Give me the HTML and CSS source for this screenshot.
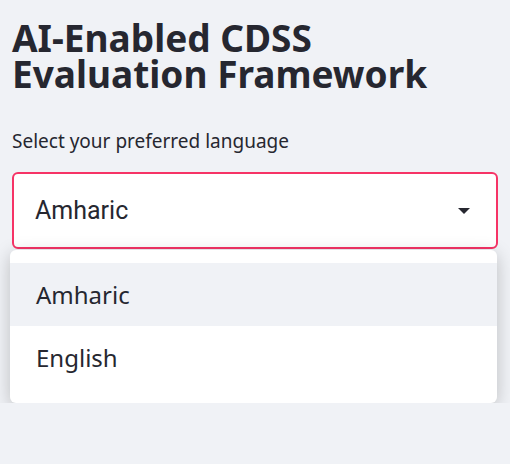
FILE: index.html
```html
<!DOCTYPE html>
<html lang="en">

<head>
    <meta charset="UTF-8">
    <meta name="viewport" content="width=device-width, initial-scale=1.0">
    <title>AI-Enabled CDSS Evaluation Framework</title>
    <link rel="stylesheet" href="styles.css">
</head>

<body>
    <div class="app-container">
        <h1 class="app-title">AI-Enabled CDSS Evaluation Framework</h1>
        <div class="field-label">Select your preferred language</div>
        <div class="select-wrap">
            <div class="select-box">
                <span class="select-value">Amharic</span>
                <svg class="select-arrow" width="12" height="6" viewBox="0 0 12 6">
                    <path d="M0 0 L12 0 L6 6 Z" fill="#262730"/>
                </svg>
            </div>
            <div class="select-menu">
                <div class="select-option active">Amharic</div>
                <div class="select-option">English</div>
            </div>
        </div>
    </div>
</body>

</html>
```

FILE: styles.css
```css
body {
    margin: 0;
    background-color: #f0f2f6;
    color: #262730;
    font-family: "Noto Sans", "Open Sans", sans-serif;
}

.app-container {
    padding: 20px 12px 0 12px;
    width: 486px;
}

.app-title {
    margin: 0;
    font-size: 37px;
    line-height: 36px;
    font-weight: 700;
    width: 460px;
}

.field-label {
    margin-top: 36px;
    font-size: 19px;
    line-height: 26px;
}

.select-wrap {
    margin-top: 18px;
}

.select-box {
    display: flex;
    align-items: center;
    justify-content: space-between;
    height: 73px;
    padding: 0 26px 0 21px;
    background-color: #fff;
    border: 2px solid #f63366;
    border-radius: 6px;
}

.select-value {
    font-family: Roboto, "Liberation Sans", sans-serif;
    font-size: 25px;
}

.select-arrow {
    display: block;
}

.select-menu {
    margin: 1px 1px 0 -2px;
    padding: 13px 0 14px 0;
    background-color: #fff;
    border-radius: 6px;
    box-shadow: 0 4px 18px rgba(0, 0, 0, 0.22);
}

.select-option {
    height: 63px;
    padding-left: 26px;
    font-size: 24px;
    line-height: 63px;
}

.select-option.active {
    background-color: #f0f2f6;
}
```
